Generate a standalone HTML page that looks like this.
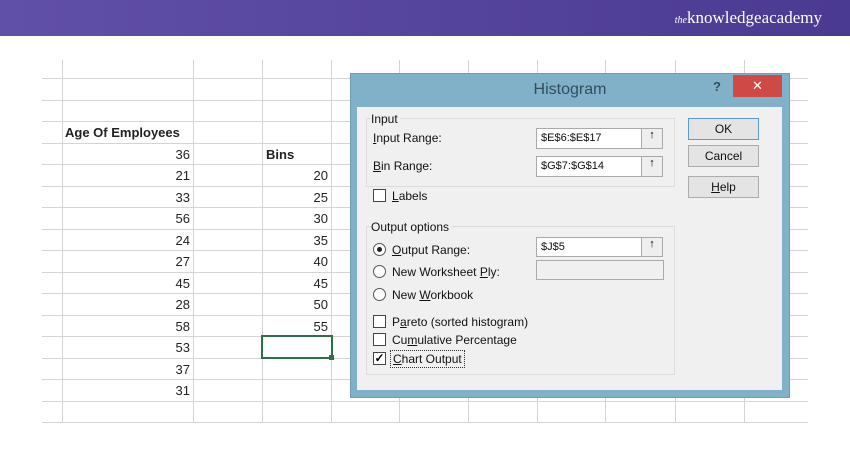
<!DOCTYPE html>
<html><head><style>
*{margin:0;padding:0;box-sizing:border-box}
body{width:850px;height:450px;background:#fff;position:relative;overflow:hidden;font-family:"Liberation Sans",sans-serif}
.hdr{position:absolute;left:0;top:0;width:850px;height:36px;background:linear-gradient(90deg,#6150a8,#4b3a92)}
.logo{position:absolute;right:28px;top:8px;color:#fff;font-family:"Liberation Serif",serif;font-size:17px}
.logo i{font-size:10px}
.a{position:absolute}
.hl{position:absolute;height:1px;background:#d4d4d4;left:42px;width:766px}
.vl{position:absolute;width:1px;background:#d4d4d4;top:60px;height:363px}
.c{position:absolute;font-size:13px;color:#222;text-align:right;width:60px}
.d{font-size:12px;color:#111}
.box{position:absolute;background:#fff;border:1px solid #aaa;font-size:11px;padding:3px 4px;color:#111}
.arr{position:absolute;width:22px;background:#eee;border:1px solid #aaa;font-size:11px;text-align:center;font-weight:bold}
.cb{position:absolute;width:13px;height:13px;border:1px solid #444;background:#fff}
.rd{position:absolute;width:13px;height:13px;border:1px solid #555;border-radius:50%;background:#fff}
.btn{position:absolute;left:688px;width:71px;height:22px;background:#e4e4e4;border:1px solid #acacac;font-size:12px;text-align:center;line-height:20px;color:#111}
u{text-decoration:underline}
</style></head><body>
<div class="hdr"><div class="logo"><i>the</i>knowledgeacademy</div></div>
<!-- grid -->
<div class="hl" style="top:78px"></div><div class="hl" style="top:100px"></div><div class="hl" style="top:121px"></div>
<div class="hl" style="top:143px"></div><div class="hl" style="top:164px"></div><div class="hl" style="top:186px"></div>
<div class="hl" style="top:207px"></div><div class="hl" style="top:229px"></div><div class="hl" style="top:250px"></div>
<div class="hl" style="top:272px"></div><div class="hl" style="top:293px"></div><div class="hl" style="top:315px"></div>
<div class="hl" style="top:336px"></div><div class="hl" style="top:358px"></div><div class="hl" style="top:379px"></div>
<div class="hl" style="top:401px"></div><div class="hl" style="top:422px"></div>
<div class="vl" style="left:62px"></div><div class="vl" style="left:193px"></div><div class="vl" style="left:262px"></div>
<div class="vl" style="left:331px"></div><div class="vl" style="left:399px"></div><div class="vl" style="left:468px"></div>
<div class="vl" style="left:537px"></div><div class="vl" style="left:605px"></div><div class="vl" style="left:675px"></div>
<div class="vl" style="left:744px"></div>
<div class="a" style="left:65px;top:125px;font-size:13px;font-weight:bold;color:#222">Age Of Employees</div>
<div class="a" style="left:266px;top:147px;font-size:13px;font-weight:bold;color:#222">Bins</div>
<div class="c" style="left:130px;top:147px">36</div><div class="c" style="left:130px;top:168px">21</div>
<div class="c" style="left:130px;top:190px">33</div><div class="c" style="left:130px;top:211px">56</div>
<div class="c" style="left:130px;top:233px">24</div><div class="c" style="left:130px;top:254px">27</div>
<div class="c" style="left:130px;top:276px">45</div><div class="c" style="left:130px;top:297px">28</div>
<div class="c" style="left:130px;top:319px">58</div><div class="c" style="left:130px;top:340px">53</div>
<div class="c" style="left:130px;top:362px">37</div><div class="c" style="left:130px;top:383px">31</div>
<div class="c" style="left:268px;top:168px">20</div><div class="c" style="left:268px;top:190px">25</div>
<div class="c" style="left:268px;top:211px">30</div><div class="c" style="left:268px;top:233px">35</div>
<div class="c" style="left:268px;top:254px">40</div><div class="c" style="left:268px;top:276px">45</div>
<div class="c" style="left:268px;top:297px">50</div><div class="c" style="left:268px;top:319px">55</div>
<div class="a" style="left:261px;top:335px;width:72px;height:24px;border:2px solid #2e7048"></div>
<div class="a" style="left:329px;top:355px;width:5px;height:5px;background:#2e7048"></div>
<!-- dialog -->
<div class="a" style="left:350px;top:73px;width:440px;height:325px;background:#81b1c8;border:1px solid #6d9cb3"></div>
<div class="a" style="left:357px;top:107px;width:425px;height:283px;background:#f0f0f0"></div>
<div class="a" style="left:520px;top:81px;width:100px;text-align:center;font-size:16px;color:#2e4e5e">Histogram</div>
<div class="a" style="left:713px;top:79px;font-size:13px;font-weight:bold;color:#2e4e5e">?</div>
<div class="a" style="left:733px;top:75px;width:49px;height:22px;background:#d04a45;color:#fff;text-align:center;font-size:13px;line-height:22px">✕</div>
<div class="a" style="left:366px;top:118px;width:309px;height:69px;border:1px solid #dcdcdc"></div>
<div class="a d" style="left:371px;top:112px;background:#f0f0f0;padding-right:2px">Input</div>
<div class="a d" style="left:373px;top:131px"><u>I</u>nput Range:</div>
<div class="a d" style="left:373px;top:159px"><u>B</u>in Range:</div>
<div class="box" style="left:536px;top:128px;width:106px;height:21px">$E$6:$E$17</div>
<div class="arr" style="left:641px;top:128px;height:21px">↑</div>
<div class="box" style="left:536px;top:156px;width:106px;height:21px">$G$7:$G$14</div>
<div class="arr" style="left:641px;top:156px;height:21px">↑</div>
<div class="cb" style="left:373px;top:189px"></div>
<div class="a d" style="left:392px;top:189px"><u>L</u>abels</div>
<div class="a" style="left:366px;top:226px;width:309px;height:149px;border:1px solid #dcdcdc"></div>
<div class="a d" style="left:371px;top:220px;background:#f0f0f0;padding-right:2px">Output options</div>
<div class="rd" style="left:373px;top:243px"><div style="position:absolute;left:3px;top:3px;width:5px;height:5px;border-radius:50%;background:#222"></div></div>
<div class="a d" style="left:392px;top:243px"><u>O</u>utput Range:</div>
<div class="rd" style="left:373px;top:265px"></div>
<div class="a d" style="left:392px;top:265px">New Worksheet <u>P</u>ly:</div>
<div class="rd" style="left:373px;top:288px"></div>
<div class="a d" style="left:392px;top:288px">New <u>W</u>orkbook</div>
<div class="box" style="left:536px;top:237px;width:106px;height:20px">$J$5</div>
<div class="arr" style="left:641px;top:237px;height:20px">↑</div>
<div class="box" style="left:536px;top:260px;width:128px;height:20px;background:#f0f0f0"></div>
<div class="cb" style="left:373px;top:315px"></div>
<div class="a d" style="left:392px;top:315px">P<u>a</u>reto (sorted histogram)</div>
<div class="cb" style="left:373px;top:333px"></div>
<div class="a d" style="left:392px;top:333px">Cu<u>m</u>ulative Percentage</div>
<div class="cb" style="left:373px;top:352px;font-size:12px;line-height:11px;text-align:center;font-weight:bold">✓</div>
<div class="a d" style="left:390px;top:350px;border:1px dotted #333;padding:1px 2px"><u>C</u>hart Output</div>
<div class="btn" style="top:118px;border-color:#5b9bd5;height:22px">OK</div>
<div class="btn" style="top:145px">Cancel</div>
<div class="btn" style="top:176px"><u>H</u>elp</div>
</body></html>
